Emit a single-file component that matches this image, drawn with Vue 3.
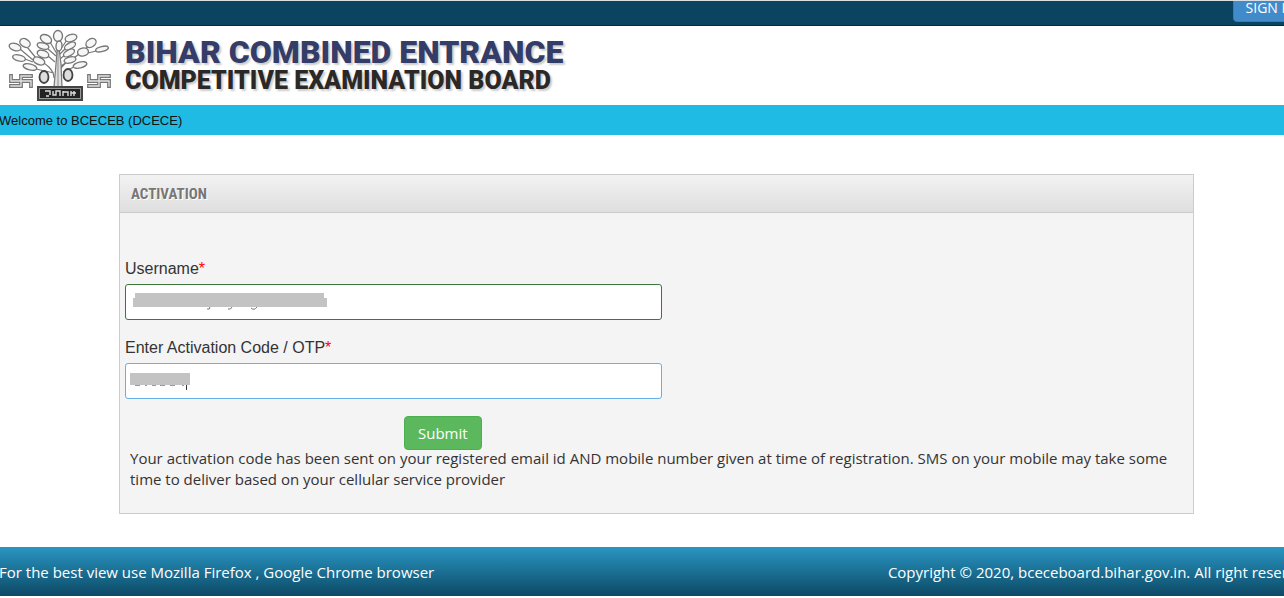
<script setup>
import {ref} from 'vue';

const username = ref('');
const otp = ref('');

// leaves of the tree: centre, radii and tilt
const leaves = [
    {x: 58, y: 10, rx: 4.5, ry: 5.5, tilt: 0},
    {x: 71, y: 12, rx: 6, ry: 3.5, tilt: -18},
    {x: 46, y: 13, rx: 6, ry: 4, tilt: 28},
    {x: 25, y: 17, rx: 5.5, ry: 4, tilt: 30},
    {x: 15, y: 21, rx: 6, ry: 3.5, tilt: 18},
    {x: 91, y: 17, rx: 5.5, ry: 4, tilt: -35},
    {x: 102, y: 23, rx: 6.5, ry: 2.5, tilt: -14},
    {x: 43, y: 20, rx: 6, ry: 3, tilt: 16},
    {x: 59, y: 20, rx: 3, ry: 5, tilt: 4},
    {x: 70, y: 20, rx: 6, ry: 3, tilt: -28},
    {x: 43, y: 28, rx: 6, ry: 3.5, tilt: 20},
    {x: 69, y: 27, rx: 6, ry: 3, tilt: -28},
    {x: 83, y: 26, rx: 5.5, ry: 4, tilt: -12},
    {x: 19, y: 32, rx: 6.5, ry: 3, tilt: 14},
    {x: 39, y: 35, rx: 6, ry: 3.5, tilt: 22},
    {x: 70, y: 34, rx: 6, ry: 3, tilt: -14},
    {x: 30, y: 41, rx: 7, ry: 3, tilt: 14},
    {x: 80, y: 39, rx: 7, ry: 3, tilt: -14},
];
</script>

<template>
    <div class="page">
        <div class="topbar">
            <button class="sign-btn" type="button">SIGN IN</button>
        </div>
        <header class="brand">
            <svg class="emblem" viewBox="0 0 120 79" aria-hidden="true">
                <g fill="none" stroke="#777" stroke-width="1.2">
                    <path d="M54 52 C54 44 46 37 39 35 M54 47 L36 43 M55 36 L48 30 M56 30 L48 23 M57 28 L50 16 M36 32 L27 21 M33 34 L20 23 M33 36 L25 33 M60 44 C65 34 74 33 79 28 M61 40 L67 36 M60 33 L66 28 M60 28 L66 22 M60 24 L67 14 M63 46 L74 41 M85 23 L89 20 M88 27 L96 25" />
                    <path d="M54 61 L56 38 L58 14 L61 38 L62 61" fill="#e0e0e0" />
                    <path d="M58 26 V60" stroke="#999" />
                </g>
                <g fill="#f6f6f6" stroke="#777" stroke-width="1.4">
                    <ellipse
                        v-for="(leaf, index) in leaves"
                        :key="index"
                        :cx="leaf.x"
                        :cy="leaf.y"
                        :rx="leaf.rx"
                        :ry="leaf.ry"
                        :transform="`rotate(${leaf.tilt} ${leaf.x} ${leaf.y})`"
                    />
                </g>
                <g fill="#ddd" stroke="#444" stroke-width="1.8">
                    <ellipse cx="44" cy="51" rx="4.5" ry="6" />
                    <ellipse cx="68" cy="49" rx="4.5" ry="6" />
                </g>
                <g fill="none" stroke-linecap="square">
                    <path d="M11 50 V55 H31 V60 M31 50 H21 V60 H11 M89 50 V55 H109 V60 M109 50 H99 V60 H89" stroke="#777" stroke-width="3.8" />
                    <path d="M11 50 V55 H31 V60 M31 50 H21 V60 H11 M89 50 V55 H109 V60 M109 50 H99 V60 H89" stroke="#e4e4e4" stroke-width="1.3" />
                </g>
                <rect x="37" y="60" width="46" height="15" fill="#444" />
                <rect x="39.5" y="62.5" width="41" height="10" fill="#222" stroke="#999" stroke-width="1" />
                <path d="M45 65 H50 V69 M46 70 H49 M53 65 V69 H56 V65 H60 V70 M63 65 V70 M63 66 H68 V70 M71 65 V70 M74 65 V70 M71 67 H76" fill="none" stroke="#ddd" stroke-width="1.4" />
            </svg>
            <div class="titles">
                <div class="title-main">BIHAR COMBINED ENTRANCE</div>
                <div class="title-sub">COMPETITIVE EXAMINATION BOARD</div>
            </div>
        </header>
        <div class="welcome">Welcome to BCECEB (DCECE)</div>

        <main>
            <section class="panel">
                <h1>ACTIVATION</h1>
                <form @submit.prevent>
                    <label for="username">Username<span class="star">*</span></label>
                    <div class="field">
                        <input id="username" v-model="username" class="valid" type="text">
                        <svg class="mask" width="210" height="34" aria-hidden="true">
                            <path d="M9 8 H198 V13 H201 V22 H7 V13 H9 Z" fill="#c3c3c3" />
                            <path d="M84 22 Q84 25 81 24 M106 22 Q105 25 102 24 M125 23 Q128 26 131 22" fill="none" stroke="#777" />
                        </svg>
                    </div>
                    <label for="otp">Enter Activation Code / OTP<span class="star">*</span></label>
                    <div class="field">
                        <input id="otp" v-model="otp" class="active" type="text">
                        <svg class="mask" width="210" height="34" aria-hidden="true">
                            <path d="M4 9 H64 V21 H4 Z" fill="#c3c3c3" />
                            <path d="M9 21.5 H14 M19 21.5 H21 M26 21.5 H30 M34 21.5 H39 M44 21.5 H49 M56 21.5 H58" stroke="#999" />
                            <path d="M60.5 21 V26" stroke="#333" />
                        </svg>
                    </div>
                    <button class="submit-btn" type="submit">Submit</button>
                    <p>Your activation code has been sent on your registered email id AND mobile number given at time of registration. SMS on your mobile may take some time to deliver based on your cellular service provider</p>
                </form>
            </section>
        </main>

        <footer>
            <span>For the best view use Mozilla Firefox , Google Chrome browser</span>
            <span class="copyright">Copyright © 2020, bceceboard.bihar.gov.in. All right reserved</span>
        </footer>
    </div>
</template>

<style>
body{
    margin:0;
    background:#fff;
}
</style>

<style scoped>
*{
    box-sizing:border-box;
}
.page{
    overflow:hidden;
    color:#333;
    font-family:"Open Sans", "Noto Sans", sans-serif;
    font-size:15px;
}
.topbar{
    display:flex;
    justify-content:flex-end;
    height:26px;
    overflow:hidden;
    background:#0b4460;
    border-top:1px solid #dcdfe1;
    border-bottom:1px solid #06293b;
}
.sign-btn{
    height:30px;
    margin:-9px -25px 0 0;
    padding:0 12px;
    border:1px solid #357ebd;
    border-radius:4px;
    background:#428bca;
    color:#fff;
    font-family:inherit;
    font-size:14px;
    flex-shrink:0;
}
.brand{
    display:flex;
    height:79px;
}
.emblem{
    width:120px;
    height:79px;
    flex-shrink:0;
}
.titles{
    padding:10px 0 0 5px;
    font-family:Roboto, "Liberation Sans", sans-serif;
    font-weight:900;
    white-space:nowrap;
    text-shadow:2px 2px 2px #ccc;
}
.title-main{
    color:#343d68;
    font-size:32px;
    line-height:32px;
}
.title-sub{
    color:#2b2828;
    font-size:25px;
    line-height:26px;
}
.welcome{
    height:30px;
    margin-left:-1px;
    background:#1fbbe4;
    color:#111;
    font-family:"Liberation Sans", sans-serif;
    font-size:13px;
    line-height:31px;
}
main{
    padding:39px 90px 33px 119px;
}
.panel{
    border:1px solid #ccc;
    background:#f4f4f4;
}
h1{
    height:38px;
    margin:0;
    padding-left:11px;
    border-bottom:1px solid #ccc;
    background:linear-gradient(#f2f2f2, #dfdfdf);
    color:#777;
    font-family:"Roboto Condensed", Roboto, sans-serif;
    font-size:15px;
    font-weight:700;
    line-height:38px;
    text-shadow:1px 1px 0 #fff;
}
form{
    padding:46px 0 23px;
}
label{
    display:block;
    margin-left:5px;
    font-family:"Liberation Sans", sans-serif;
    font-size:16px;
    line-height:20px;
}
.star{
    color:red;
}
.field{
    position:relative;
    width:50%;
    margin:5px 0 18px 5px;
}
.field input{
    display:block;
    width:100%;
    height:36px;
    padding:6px 8px;
    border:1px solid #66afe9;
    border-radius:3px;
    background:#fff;
    font-family:"Liberation Sans", sans-serif;
    font-size:14px;
    outline:none;
}
.field input.valid{
    border-color:#3c763d;
}
.mask{
    position:absolute;
    top:1px;
    left:1px;
    pointer-events:none;
}
.submit-btn{
    display:block;
    height:34px;
    margin:-1px 0 0 284px;
    padding:0 13px;
    border:1px solid #4cae4c;
    border-radius:4px;
    background:#5cb85c;
    color:#fff;
    font-family:inherit;
    font-size:15px;
    font-weight:500;
}
p{
    margin:-2px 0 0;
    padding:0 10px;
    line-height:21px;
}
footer{
    display:flex;
    justify-content:space-between;
    height:49px;
    margin:0 -29px 2px -1px;
    background:linear-gradient(#2996c3, #0d4965);
    color:#fff;
    font-weight:500;
    line-height:51px;
    white-space:nowrap;
}
.copyright{
    margin-left:20px;
}
</style>
